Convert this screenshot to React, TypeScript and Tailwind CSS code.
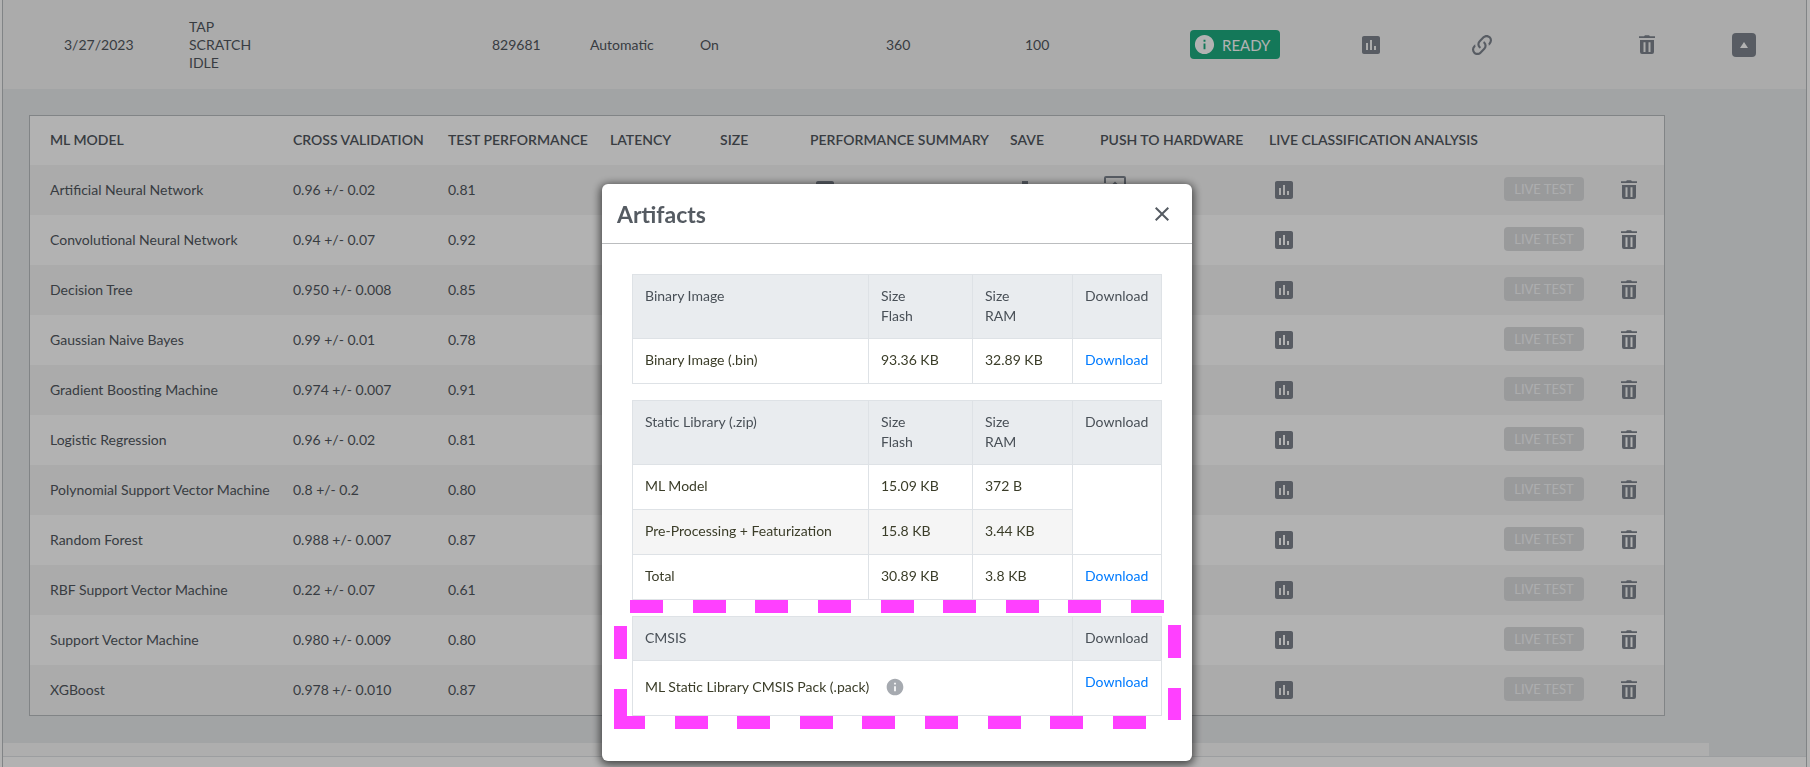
import React, { useState } from 'react';
import { MdClose, MdFileDownload, MdInfo, MdInsertChart } from 'react-icons/md';

interface ModelRow {
    name: string;
    crossValidation: string;
    testPerformance: string;
}

const models: ModelRow[] = [
    { name: 'Artificial Neural Network', crossValidation: '0.96 +/- 0.02', testPerformance: '0.81' },
    { name: 'Convolutional Neural Network', crossValidation: '0.94 +/- 0.07', testPerformance: '0.92' },
    { name: 'Decision Tree', crossValidation: '0.950 +/- 0.008', testPerformance: '0.85' },
    { name: 'Gaussian Naive Bayes', crossValidation: '0.99 +/- 0.01', testPerformance: '0.78' },
    { name: 'Gradient Boosting Machine', crossValidation: '0.974 +/- 0.007', testPerformance: '0.91' },
    { name: 'Logistic Regression', crossValidation: '0.96 +/- 0.02', testPerformance: '0.81' },
    { name: 'Polynomial Support Vector Machine', crossValidation: '0.8 +/- 0.2', testPerformance: '0.80' },
    { name: 'Random Forest', crossValidation: '0.988 +/- 0.007', testPerformance: '0.87' },
    { name: 'RBF Support Vector Machine', crossValidation: '0.22 +/- 0.07', testPerformance: '0.61' },
    { name: 'Support Vector Machine', crossValidation: '0.980 +/- 0.009', testPerformance: '0.80' },
    { name: 'XGBoost', crossValidation: '0.978 +/- 0.010', testPerformance: '0.87' },
];

const modelColumns = [
    'ML MODEL',
    'CROSS VALIDATION',
    'TEST PERFORMANCE',
    'LATENCY',
    'SIZE',
    'PERFORMANCE SUMMARY',
    'SAVE',
    'PUSH TO HARDWARE',
    'LIVE CLASSIFICATION ANALYSIS',
];

const TrashIcon = () => (
    <svg width="16" height="19" viewBox="0 0 16 19" fill="currentColor">
        <path d="M0 1.3h5L6 .3h4l1 1h5V3H0z" />
        <path
            fillRule="evenodd"
            d="M1 5h14v12a2 2 0 0 1-2 2H3a2 2 0 0 1-2-2V5zm3.5 2.3V17h2V7.3h-2zm5 0V17h2V7.3h-2z"
        />
    </svg>
);

const LinkIcon = () => (
    <svg width="26" height="26" viewBox="0 0 24 24" fill="currentColor">
        <path d="M10.59,13.41C11,13.8 11,14.44 10.59,14.83C10.2,15.22 9.56,15.22 9.17,14.83C7.22,12.88 7.22,9.71 9.17,7.76L12.71,4.22C14.66,2.27 17.83,2.27 19.78,4.22C21.73,6.17 21.73,9.34 19.78,11.29L18.29,12.78C18.3,11.96 18.17,11.14 17.89,10.36L18.36,9.88C19.54,8.71 19.54,6.81 18.36,5.64C17.19,4.46 15.29,4.46 14.12,5.64L10.59,9.17C9.41,10.34 9.41,12.24 10.59,13.41M13.41,9.17C13.8,8.78 14.44,8.78 14.83,9.17C16.78,11.12 16.78,14.29 14.83,16.24L11.29,19.78C9.34,21.73 6.17,21.73 4.22,19.78C2.27,17.83 2.27,14.66 4.22,12.71L5.71,11.22C5.7,12.04 5.83,12.86 6.11,13.65L5.64,14.12C4.46,15.29 4.46,17.19 5.64,18.36C6.81,19.54 8.71,19.54 9.88,18.36L13.41,14.83C14.59,13.66 14.59,11.76 13.41,10.59C13,10.2 13,9.56 13.41,9.17Z" />
    </svg>
);

const PushIcon = () => (
    <svg width="24" height="28" viewBox="0 0 24 28" fill="none" stroke="currentColor" strokeWidth="2">
        <path d="M2 7V2a1 1 0 0 1 1-1h18a1 1 0 0 1 1 1v22a1 1 0 0 1-1 1H3a1 1 0 0 1-1-1v-3" />
        <path d="M12 19V7M8 11l4-4 4 4" />
    </svg>
);

const IconButton: React.FC<{ label: string; children: React.ReactNode }> = ({ label, children }) => (
    <button aria-label={label} className="block text-[#7e858f]">
        {children}
    </button>
);

const SummaryTable = () => (
    <table className="w-full table-fixed bg-[#f5f5f5]">
        <colgroup>
            <col className="w-[165px]" />
            <col className="w-[304px]" />
            <col className="w-[98px]" />
            <col className="w-[110px]" />
            <col className="w-[186px]" />
            <col className="w-[139px]" />
            <col className="w-[165px]" />
            <col className="w-[169px]" />
            <col className="w-[110px]" />
            <col className="w-[170px]" />
            <col className="w-[93px]" />
            <col />
        </colgroup>
        <tbody>
            <tr className="h-[89px]">
                <td className="pl-[61px]">3/27/2023</td>
                <td className="pl-[21px]">
                    <div className="w-20">TAP SCRATCH IDLE</div>
                </td>
                <td className="pl-5">829681</td>
                <td className="pl-5">Automatic</td>
                <td className="pl-5">On</td>
                <td className="pl-5">360</td>
                <td className="pl-5">100</td>
                <td className="pl-5">
                    <button className="flex h-[29px] w-[90px] items-center gap-1.5 rounded bg-[#1dac80] pl-[3px] text-[15px] text-white">
                        <MdInfo size={23} />
                        READY
                    </button>
                </td>
                <td className="pl-5">
                    <IconButton label="Summary">
                        <MdInsertChart size={24} />
                    </IconButton>
                </td>
                <td className="pl-5">
                    <IconButton label="Copy link">
                        <LinkIcon />
                    </IconButton>
                </td>
                <td className="pl-5">
                    <IconButton label="Delete pipeline">
                        <TrashIcon />
                    </IconButton>
                </td>
                <td className="pl-5">
                    <button
                        aria-label="Collapse"
                        className="flex size-6 items-center justify-center rounded bg-[#7e858f] text-white"
                    >
                        <svg width="8" height="6" viewBox="0 0 8 6" fill="currentColor">
                            <path d="M4 0l4 6H0z" />
                        </svg>
                    </button>
                </td>
            </tr>
        </tbody>
    </table>
);

const ModelTable = () => (
    <table className="w-full table-fixed whitespace-nowrap">
        <colgroup>
            <col className="w-[243px]" />
            <col className="w-[155px]" />
            <col className="w-[162px]" />
            <col className="w-[110px]" />
            <col className="w-[90px]" />
            <col className="w-[200px]" />
            <col className="w-[90px]" />
            <col className="w-[169px]" />
            <col className="w-[235px]" />
            <col className="w-[117px]" />
            <col />
        </colgroup>
        <thead>
            <tr className="h-[49px] bg-white text-left">
                {modelColumns.map(column => (
                    <th key={column} className="pb-px pl-5 font-semibold">
                        {column}
                    </th>
                ))}
                <td />
                <td />
            </tr>
        </thead>
        <tbody>
            {models.map(model => (
                <tr key={model.name} className="h-[50px] bg-white odd:bg-[#f5f5f5]">
                    <td className="pl-5">{model.name}</td>
                    <td className="pl-5">{model.crossValidation}</td>
                    <td className="pl-5">{model.testPerformance}</td>
                    <td />
                    <td />
                    <td className="pl-[23px]">
                        <IconButton label={`Performance summary of ${model.name}`}>
                            <MdInsertChart size={24} />
                        </IconButton>
                    </td>
                    <td className="pl-[23px]">
                        <IconButton label={`Save ${model.name}`}>
                            <MdFileDownload size={24} />
                        </IconButton>
                    </td>
                    <td className="pl-[23px]">
                        <IconButton label={`Push ${model.name}`}>
                            <PushIcon />
                        </IconButton>
                    </td>
                    <td className="pl-[23px]">
                        <IconButton label={`Live analysis of ${model.name}`}>
                            <MdInsertChart size={24} />
                        </IconButton>
                    </td>
                    <td className="pb-0.5 pl-5">
                        <button disabled className="block h-6 w-20 rounded bg-[#dcdddf] text-[13px] text-[#f7f8fa]">
                            LIVE TEST
                        </button>
                    </td>
                    <td className="pb-0.5 pl-5">
                        <IconButton label={`Delete ${model.name}`}>
                            <TrashIcon />
                        </IconButton>
                    </td>
                </tr>
            ))}
        </tbody>
    </table>
);

const headCell = 'border border-[#dee2e6] bg-[#e9ecef] px-3 pt-[11px] pb-3 text-left align-top font-normal text-[#495057]';
const cell = 'border border-[#dee2e6] px-3 pt-[11px] pb-[13px] align-top';

const DownloadLink = () => (
    <a href="#download" className="text-[#007bff]">
        Download
    </a>
);

const ArtifactTable: React.FC<{ children: React.ReactNode }> = ({ children }) => (
    <table className="mb-4 w-full table-fixed border-collapse leading-5 text-[#3b3d29]">
        <colgroup>
            <col />
            <col className="w-[104px]" />
            <col className="w-[100px]" />
            <col className="w-[89px]" />
        </colgroup>
        {children}
    </table>
);

const SizeHead: React.FC<{ title: string }> = ({ title }) => (
    <thead>
        <tr>
            <th className={headCell}>{title}</th>
            <th className={headCell}>
                Size
                <br />
                Flash
            </th>
            <th className={headCell}>
                Size
                <br />
                RAM
            </th>
            <th className={headCell}>Download</th>
        </tr>
    </thead>
);

// dashed marker around the CMSIS section
const topDashes = [17, 80, 142, 205, 268, 330, 393, 455, 518];
const bottomDashes = [62, 124, 187, 249, 312, 375, 437, 500];

const Highlight = () => (
    <svg
        className="pointer-events-none absolute -top-4 -left-[19px]"
        width="569"
        height="130"
        viewBox="0 0 569 130"
        fill="#ff40ff"
    >
        {topDashes.map(x => (
            <rect key={x} x={x} y="0" width="33" height="13" />
        ))}
        <rect x="1" y="26" width="13" height="33" />
        <path d="M1 89h13v27h18v13H1z" />
        {bottomDashes.map(x => (
            <rect key={x} x={x} y="116" width="33" height="13" />
        ))}
        <rect x="555" y="25" width="13" height="33" />
        <rect x="555" y="88" width="13" height="32" />
    </svg>
);

const ArtifactsModal: React.FC<{ onClose: () => void }> = ({ onClose }) => (
    <div className="fixed inset-0 z-50 flex items-start justify-center overflow-hidden bg-black/30 pt-[184px] pr-4">
        <div
            role="dialog"
            aria-labelledby="artifacts-title"
            className="w-full max-w-[590px] rounded-md bg-white shadow-[0_2px_8px_2px_rgba(0,0,0,0.6)]"
        >
            <div className="flex h-[60px] items-center justify-between border-b border-[#bbbdbf] pr-[18px] pl-[15px]">
                <h2 id="artifacts-title" className="text-[23px] font-bold text-[#555b62]">
                    Artifacts
                </h2>
                <button onClick={onClose} aria-label="Close" className="text-[#555b62]">
                    <MdClose size={24} />
                </button>
            </div>
            <div className="px-[30px] pt-[30px] pb-[29px]">
                <ArtifactTable>
                    <SizeHead title="Binary Image" />
                    <tbody>
                        <tr>
                            <td className={cell}>Binary Image (.bin)</td>
                            <td className={cell}>93.36 KB</td>
                            <td className={cell}>32.89 KB</td>
                            <td className={cell}>
                                <DownloadLink />
                            </td>
                        </tr>
                    </tbody>
                </ArtifactTable>
                <ArtifactTable>
                    <SizeHead title="Static Library (.zip)" />
                    <tbody>
                        <tr>
                            <td className={cell}>ML Model</td>
                            <td className={cell}>15.09 KB</td>
                            <td className={cell}>372 B</td>
                            <td className={cell} rowSpan={2} />
                        </tr>
                        <tr className="bg-[#f5f5f5]">
                            <td className={cell}>Pre-Processing + Featurization</td>
                            <td className={cell}>15.8 KB</td>
                            <td className={cell}>3.44 KB</td>
                        </tr>
                        <tr>
                            <td className={cell}>Total</td>
                            <td className={cell}>30.89 KB</td>
                            <td className={cell}>3.8 KB</td>
                            <td className={cell}>
                                <DownloadLink />
                            </td>
                        </tr>
                    </tbody>
                </ArtifactTable>
                <div className="relative">
                    <ArtifactTable>
                        <thead>
                            <tr>
                                <th colSpan={3} className={headCell}>
                                    CMSIS
                                </th>
                                <th className={headCell}>Download</th>
                            </tr>
                        </thead>
                        <tbody>
                            <tr>
                                <td colSpan={3} className={cell}>
                                    <div className="flex h-[30px] items-center gap-4">
                                        ML Static Library CMSIS Pack (.pack)
                                        <MdInfo size={20} className="text-[#a6aab0]" />
                                    </div>
                                </td>
                                <td className={cell}>
                                    <DownloadLink />
                                </td>
                            </tr>
                        </tbody>
                    </ArtifactTable>
                    <Highlight />
                </div>
            </div>
        </div>
    </div>
);

export default function App() {
    const [showArtifacts, setShowArtifacts] = useState(true);

    return (
        <div className="h-screen overflow-hidden bg-white font-['Lato',sans-serif] text-sm leading-[18px] text-[#51575e]">
            <div className="mr-[3px] ml-0.5 min-h-screen border-x border-[#b9bdc1]">
                <SummaryTable />
                <div className="bg-[#e9ebed] pt-[26px]">
                    <div className="mr-[141px] mb-[27px] ml-[26px] border border-[#b9bdc1]">
                        <ModelTable />
                    </div>
                    <div className="mr-[97px] h-[13px] bg-[#fafafa]" />
                </div>
                <div className="h-4 border-t border-[#e0e2e5]" />
            </div>
            {showArtifacts && <ArtifactsModal onClose={() => setShowArtifacts(false)} />}
        </div>
    );
}
